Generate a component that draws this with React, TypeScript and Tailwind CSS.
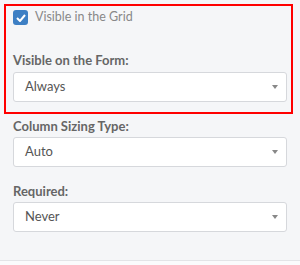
import React from 'react';

const fields = [
  { label: 'Column Sizing Type:', value: 'Auto' },
  { label: 'Required:', value: 'Never' },
];

const Select: React.FC<{ value: string }> = ({ value }) => (
  <div className="h-[30px] w-[274px] flex items-center justify-between rounded-[3px] border border-[#d6d8dc] bg-white pl-[11px] pr-[8px]">
    <span className="text-[13px] text-[#555]">{value}</span>
    <svg width="6" height="4" viewBox="0 0 6 4">
      <path d="M0 0 L6 0 L3 4 Z" fill="#888" />
    </svg>
  </div>
);

const App: React.FC = () => {
  return (
    <div className="w-[300px] h-[265px] bg-[#f5f6f8] font-['Lato',sans-serif] flex flex-col">
      <div className="flex-1 px-[4px] pt-[4px]">
        {/* highlighted block */}
        <div className="border-2 border-[#ff0000] w-[289px] h-[110px] pl-[7px] pt-[3px]">
          <label className="flex items-center gap-[7px] h-[17px]">
            <span className="w-[15px] h-[15px] rounded-[3px] bg-[#3d7fc4] flex items-center justify-center">
              <svg width="10" height="8" viewBox="0 0 10 8">
                <path d="M1 4 L4 7 L9 1" stroke="white" strokeWidth="2" fill="none" />
              </svg>
            </span>
            <span className="text-[12.5px] text-[#888]">Visible in the Grid</span>
          </label>
          <div className="mt-[25px] text-[13px] font-bold text-[#666] leading-[18px]">Visible on the Form:</div>
          <div className="mt-[3px]">
            <Select value="Always" />
          </div>
        </div>
        <div className="pl-[9px] pt-[3px] flex flex-col gap-[15px]">
          {fields.map((f) => (
            <div key={f.label}>
              <div className="text-[13px] font-bold text-[#666] leading-[18px]">{f.label}</div>
              <div className="mt-[2px]">
                <Select value={f.value} />
              </div>
            </div>
          ))}
        </div>
      </div>
      <div className="h-[5px] border-t border-[#e3e4e7] bg-[#fafbfc]" />
    </div>
  );
};

export default App;
